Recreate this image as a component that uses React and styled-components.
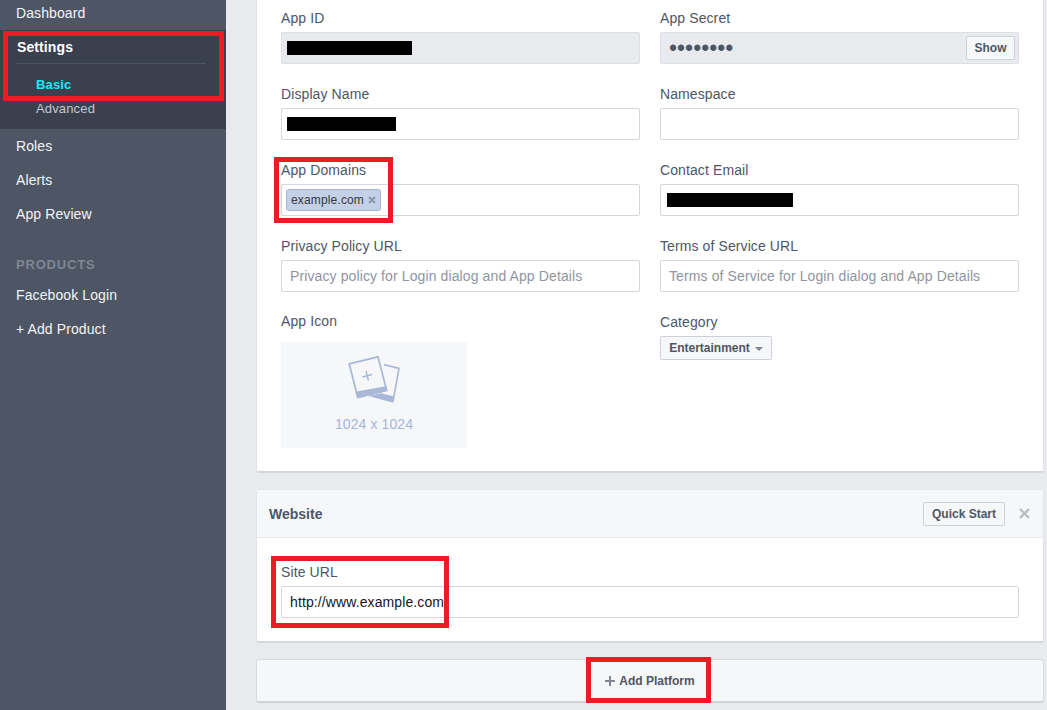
import React from 'react';
import styled, { createGlobalStyle, css } from 'styled-components';

const GlobalStyle = createGlobalStyle`
  html, body {
    margin: 0;
    height: 100%;
    overflow: hidden;
    background: #e9eaed;
    font-family: "Liberation Sans", Arial, sans-serif;
    letter-spacing: 0.1px;
  }
  * { box-sizing: border-box; }
`;

const Page = styled.div`
  position: relative;
  display: flex;
  width: 1047px;
  height: 710px;
  overflow: hidden;
`;

const Sidebar = styled.nav`
  flex: 0 0 226px;
  background: #4e5665;
  font-size: 14px;
  color: #fff;
`;

const NavItem = styled.div`
  height: ${props => props.$height || 34}px;
  padding: ${props => (props.$top ? '0' : '9px')} 16px 0;
  line-height: ${props => (props.$top ? '26px' : '17px')};
  color: #f2f3f5;
`;

const ActiveGroup = styled.div`
  height: 99px;
  padding: 8px 20px 0 16px;
  background: #3a404e;
`;

const GroupTitle = styled.div`
  height: 26px;
  padding-left: 1px;
  line-height: 18px;
  font-weight: bold;
  color: #fff;
  border-bottom: 1px solid #4e5665;
`;

const SubItem = styled.div`
  margin-top: ${props => (props.$first ? '9px' : '0')};
  padding-left: 20px;
  line-height: 24px;
  font-size: 13px;
  letter-spacing: 0.15px;
  font-weight: ${props => (props.$active ? 'bold' : 'normal')};
  color: ${props => (props.$active ? '#1de9f6' : '#c4c8d0')};
`;

const SectionTitle = styled.div`
  margin-top: 20px;
  padding: 0 16px;
  height: 27px;
  line-height: 28px;
  font-size: 13px;
  font-weight: bold;
  letter-spacing: 0.8px;
  color: #7f8794;
`;

const Main = styled.main`
  flex: 1;
  padding: 0 3px 0 30px;
`;

const Card = styled.section`
  background: #fff;
  border: 1px solid #e2e3e7;
  border-top: ${props => (props.$open ? 'none' : '1px solid #e5e6e9')};
  border-bottom: 2px solid #d3d6db;
  border-radius: 0 0 3px 3px;
`;

const FieldGrid = styled.div`
  display: grid;
  grid-template-columns: 359px 359px;
  column-gap: 20px;
  row-gap: 21px;
  padding: 9px 24px 23px 24px;
`;

const Field = styled.div`
  min-width: 0;
`;

const Label = styled.div`
  height: 18px;
  line-height: 18px;
  margin-top: ${props => (props.$raise ? -props.$raise : 0)}px;
  margin-bottom: ${props => props.$gap ?? 5}px;
  font-size: 14px;
  color: #4e5665;
`;

const boxStyle = css`
  display: flex;
  align-items: center;
  width: 100%;
  height: 32px;
  padding: 0 8px;
  border: 1px solid #d3d6db;
  border-radius: 2px;
  background: #fff;
  font-family: inherit;
  font-size: 14px;
  letter-spacing: 0.11px;
  color: #141823;
  outline: none;

  &::placeholder {
    color: #8f95a1;
    opacity: 1;
  }
`;

const TextInput = styled.input`
  ${boxStyle};
`;

const InputBox = styled.div`
  ${boxStyle};
  padding: 0 3px 0 5px;
  background: ${props => (props.$disabled ? '#e9eaed' : '#fff')};
  border-color: ${props => (props.$disabled ? '#dddfe4' : '#d3d6db')};
`;

const Redacted = styled.span`
  display: block;
  width: ${props => props.$width}px;
  height: 14px;
  background: #000;
  margin-left: ${props => props.$left || 0}px;
`;

const Bullets = styled.span`
  flex: 1;
  padding-left: 3px;
  font-size: 23px;
  line-height: 30px;
  letter-spacing: 0;
  color: #4e5665;
`;

const Button = styled.button`
  display: inline-flex;
  align-items: center;
  justify-content: center;
  width: ${props => props.$width}px;
  height: 24px;
  padding: 0;
  border: 1px solid #cdd0d6;
  border-radius: 2px;
  background: #f6f7f9;
  font-family: inherit;
  font-size: 12px;
  font-weight: bold;
  color: #4e5665;
`;

const Caret = styled.span`
  width: 0;
  height: 0;
  margin-left: 5px;
  margin-top: 2px;
  border-left: 4.5px solid transparent;
  border-right: 4.5px solid transparent;
  border-top: 4.5px solid #7f8592;
`;

const Chip = styled.span`
  display: inline-flex;
  align-items: center;
  height: 22px;
  width: 95px;
  margin-left: -1px;
  padding: 0 0 0 4px;
  border: 1px solid #a3b5d6;
  border-radius: 3px;
  background: #c4d0e6;
  font-size: 12px;
  letter-spacing: 0.15px;
  color: #333a4a;
`;

const ChipClose = styled.svg`
  width: 8px;
  height: 8px;
  margin-left: 4px;
`;

const IconTile = styled.div`
  display: flex;
  flex-direction: column;
  align-items: center;
  width: 186px;
  height: 106px;
  margin-top: 12px;
  padding-top: 13px;
  background: #f6f7f9;
`;

const IconCaption = styled.div`
  margin-top: 11px;
  line-height: 18px;
  font-size: 14px;
  color: #a5b6d9;
`;

const WebsiteCard = styled(Card)`
  margin-top: 16px;
  border-radius: 3px;
`;

const CardHeader = styled.header`
  display: flex;
  align-items: center;
  height: 48px;
  padding: 0 13px 0 12px;
  background: #f6f7f9;
  border-bottom: 1px solid #e9eaed;
`;

const CardTitle = styled.h3`
  flex: 1;
  margin: 0;
  font-size: 14px;
  letter-spacing: 0;
  color: #4e5665;
`;

const CloseIcon = styled.svg`
  width: 11px;
  height: 11px;
  margin-left: 14px;
`;

const CardBody = styled.div`
  padding: 25px 24px 23px 24px;
`;

const AddBar = styled.div`
  display: flex;
  align-items: center;
  justify-content: center;
  height: 44px;
  margin-top: 16px;
  background: #f6f7f9;
  border: 1px solid #d9dbe0;
  border-bottom: 2px solid #d0d2d7;
  border-radius: 3px;
  font-size: 12px;
  font-weight: bold;
  letter-spacing: 0;
  color: #4e5665;
`;

const PlusIcon = styled.svg`
  width: 10px;
  height: 10px;
  margin-right: 4px;
`;

const Highlight = styled.div`
  position: absolute;
  left: ${props => props.$x}px;
  top: ${props => props.$y}px;
  width: ${props => props.$w}px;
  height: ${props => props.$h}px;
  border: 5px solid #ed1c24;
  pointer-events: none;
`;

const PhotoIcon = () => (
  <svg width="53" height="49" viewBox="78 25 53 49" fill="none">
    <path d="M114 34.6 129 38.4 123 71.5" stroke="#a9b8d8" strokeWidth="1.6" />
    <path d="M98.3 66 111 63.2 124.2 66.5 123.3 72.7Z" fill="#a9b8d8" />
    <path d="M79.2 33.8 108 26.8 116.6 60.4 87.8 67.5Z" stroke="#a9b8d8" strokeWidth="1.7" />
    <path d="M85.3 61.7 116.7 56 117.3 61 87.3 68.3Z" fill="#a9b8d8" />
    <path d="M92.4 47 102 44.6M96 41 98.4 50.6" stroke="#a9b8d8" strokeWidth="1.5" />
  </svg>
);

export default function App() {
  return (
    <Page>
      <GlobalStyle />
      <Sidebar>
        <NavItem $top $height={30}>Dashboard</NavItem>
        <ActiveGroup>
          <GroupTitle>Settings</GroupTitle>
          <SubItem $first $active>Basic</SubItem>
          <SubItem>Advanced</SubItem>
        </ActiveGroup>
        <NavItem>Roles</NavItem>
        <NavItem>Alerts</NavItem>
        <NavItem>App Review</NavItem>
        <SectionTitle>PRODUCTS</SectionTitle>
        <NavItem>Facebook Login</NavItem>
        <NavItem>+ Add Product</NavItem>
      </Sidebar>

      <Main>
        <Card $open>
          <FieldGrid>
            <Field>
              <Label>App ID</Label>
              <InputBox $disabled><Redacted $width={125} /></InputBox>
            </Field>
            <Field>
              <Label>App Secret</Label>
              <InputBox $disabled>
                <Bullets>••••••••</Bullets>
                <Button $width={49}>Show</Button>
              </InputBox>
            </Field>
            <Field>
              <Label>Display Name</Label>
              <InputBox><Redacted $width={109} /></InputBox>
            </Field>
            <Field>
              <Label>Namespace</Label>
              <TextInput />
            </Field>
            <Field>
              <Label>App Domains</Label>
              <InputBox>
                <Chip>
                  example.com
                  <ChipClose viewBox="0 0 8 8">
                    <path d="M1 1 7 7M7 1 1 7" stroke="#8b93a6" strokeWidth="1.8" />
                  </ChipClose>
                </Chip>
              </InputBox>
            </Field>
            <Field>
              <Label>Contact Email</Label>
              <InputBox><Redacted $width={126} $left={1} /></InputBox>
            </Field>
            <Field>
              <Label>Privacy Policy URL</Label>
              <TextInput placeholder="Privacy policy for Login dialog and App Details" />
            </Field>
            <Field>
              <Label>Terms of Service URL</Label>
              <TextInput placeholder="Terms of Service for Login dialog and App Details" />
            </Field>
            <Field>
              <Label $gap={0} $raise={1}>App Icon</Label>
              <IconTile>
                <PhotoIcon />
                <IconCaption>1024 x 1024</IconCaption>
              </IconTile>
            </Field>
            <Field>
              <Label>Category</Label>
              <Button $width={112}>Entertainment<Caret /></Button>
            </Field>
          </FieldGrid>
        </Card>

        <WebsiteCard>
          <CardHeader>
            <CardTitle>Website</CardTitle>
            <Button $width={82}>Quick Start</Button>
            <CloseIcon viewBox="0 0 11 11">
              <path d="M1 1 10 10M10 1 1 10" stroke="#b9bcc4" strokeWidth="2.4" />
            </CloseIcon>
          </CardHeader>
          <CardBody>
            <Label>Site URL</Label>
            <TextInput defaultValue="http://www.example.com" />
          </CardBody>
        </WebsiteCard>

        <AddBar>
          <PlusIcon viewBox="0 0 10 10">
            <path d="M5 0V10M0 5H10" stroke="#7f8592" strokeWidth="2" />
          </PlusIcon>
          Add Platform
        </AddBar>
      </Main>

      <Highlight $x={3} $y={31} $w={221} $h={70} />
      <Highlight $x={274} $y={157} $w={119} $h={66} />
      <Highlight $x={271} $y={556} $w={178} $h={72} />
      <Highlight $x={586} $y={657} $w={125} $h={46} />
    </Page>
  );
}
